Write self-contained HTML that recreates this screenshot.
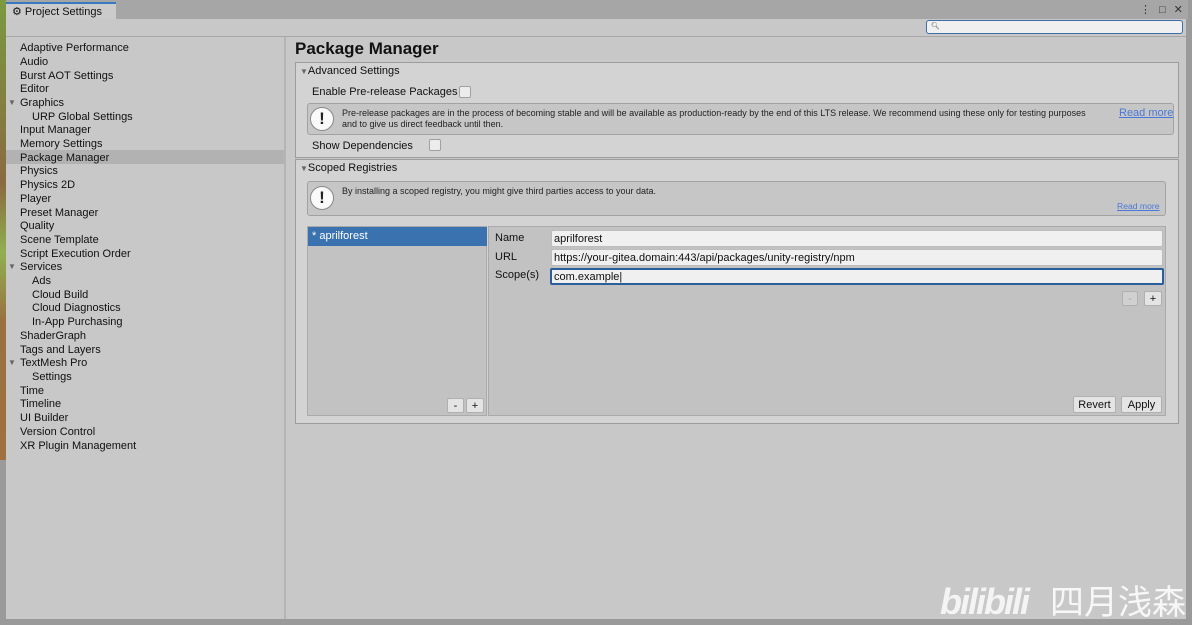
<!DOCTYPE html>
<html><head><meta charset="utf-8"><style>
*{margin:0;padding:0;box-sizing:border-box}
html,body{width:1192px;height:625px;overflow:hidden}
body{background:#9a9a9a;font-family:"Liberation Sans","Noto Sans CJK SC",sans-serif;font-size:11px;color:#101010;position:relative}
.a{position:absolute;white-space:nowrap}
.li{position:absolute;left:20px;height:14px;line-height:14px;font-size:11px;top:0;white-space:nowrap}
.box{position:absolute;background:#d3d3d3;border:1px solid #9c9c9c}
.help{position:absolute;background:#c6c6c6;border:1px solid #a2a2a2;border-radius:3px}
.ex{position:absolute;width:24px;height:24px;border-radius:50%;background:#fafafa;border:1px solid #888;text-align:center;font-weight:bold;font-size:17px;line-height:22px;color:#222}
.fld{position:absolute;background:#f0f0f0;border:1px solid #bdbdbd;border-radius:2px;height:17px;line-height:15px;padding-left:2px;font-size:11px;white-space:nowrap}
.btn{position:absolute;background:#e4e4e4;border:1px solid #b0b0b0;border-radius:2px;text-align:center;font-size:11px;line-height:14px}
.chk{position:absolute;width:12px;height:12px;background:#ececec;border:1px solid #a0a0a0;border-radius:2px}
.tri{font-size:8px;color:#666}
</style></head><body>
<div class="a" style="left:0;top:0;width:7px;height:460px;background:linear-gradient(#7a9a40,#8a6a40 40%,#90b050 55%,#9a7040 70%,#a07040)"></div>
<div class="a" style="left:6px;top:0;width:1182px;height:19px;background:#a6a6a6"></div>
<div class="a" style="left:6px;top:2px;width:110px;height:17px;background:#cbcbcb;border-top:2px solid #3b78c2;line-height:16px;padding-left:6px;font-size:11px">⚙ Project Settings</div>
<div class="a" style="left:1140px;top:3px;font-size:11px;color:#333;letter-spacing:8px">⋮□✕</div>
<div class="a" style="left:6px;top:19px;width:1180px;height:600px;background:#c8c8c8"></div>
<div class="a" style="left:6px;top:36px;width:1180px;height:1px;background:#a8a8a8"></div>
<div class="a" style="left:926px;top:20px;width:257px;height:14px;background:#f0f0f0;border:1px solid #3c6ea8;border-radius:3px;font-size:7px;padding-left:4px;line-height:12px;color:#555">🔍︎</div>
<div class="a" style="left:284px;top:37px;width:2px;height:582px;background:#b4b4b4"></div>
<div class="a" style="left:6px;top:150px;width:278px;height:14px;background:#b2b2b2"></div>
<div style="position:absolute;left:0;top:1px;width:284px;height:460px">
<div class="li" style="top:40px">Adaptive Performance</div>
<div class="li" style="top:54px">Audio</div>
<div class="li" style="top:68px">Burst AOT Settings</div>
<div class="li" style="top:81px">Editor</div>
<div class="li" style="top:95px"><span class="tri a" style="left:-12px">▼</span>Graphics</div>
<div class="li" style="top:109px;left:32px">URP Global Settings</div>
<div class="li" style="top:122px">Input Manager</div>
<div class="li" style="top:136px">Memory Settings</div>
<div class="li" style="top:150px">Package Manager</div>
<div class="li" style="top:163px">Physics</div>
<div class="li" style="top:177px">Physics 2D</div>
<div class="li" style="top:191px">Player</div>
<div class="li" style="top:205px">Preset Manager</div>
<div class="li" style="top:218px">Quality</div>
<div class="li" style="top:232px">Scene Template</div>
<div class="li" style="top:246px">Script Execution Order</div>
<div class="li" style="top:259px"><span class="tri a" style="left:-12px">▼</span>Services</div>
<div class="li" style="top:273px;left:32px">Ads</div>
<div class="li" style="top:287px;left:32px">Cloud Build</div>
<div class="li" style="top:300px;left:32px">Cloud Diagnostics</div>
<div class="li" style="top:314px;left:32px">In-App Purchasing</div>
<div class="li" style="top:328px">ShaderGraph</div>
<div class="li" style="top:342px">Tags and Layers</div>
<div class="li" style="top:355px"><span class="tri a" style="left:-12px">▼</span>TextMesh Pro</div>
<div class="li" style="top:369px;left:32px">Settings</div>
<div class="li" style="top:383px">Time</div>
<div class="li" style="top:396px">Timeline</div>
<div class="li" style="top:410px">UI Builder</div>
<div class="li" style="top:424px">Version Control</div>
<div class="li" style="top:438px">XR Plugin Management</div>
</div>

<div class="a" style="left:295px;top:39px;font-size:17px;font-weight:bold;color:#111">Package Manager</div>
<div class="box" style="left:295px;top:62px;width:884px;height:96px"></div>
<div class="a" style="left:300px;top:65px;font-size:11px"><span class="tri">▼</span>Advanced Settings</div>
<div class="a" style="left:312px;top:86px">Enable Pre-release Packages</div>
<div class="chk" style="left:459px;top:86px"></div>
<div class="help" style="left:307px;top:103px;width:867px;height:32px"></div>
<div class="ex" style="left:310px;top:107px">!</div>
<div class="a" style="left:342px;top:108px;font-size:9px;line-height:11px;color:#222">Pre-release packages are in the process of becoming stable and will be available as production-ready by the end of this LTS release. We recommend using these only for testing purposes<br>and to give us direct feedback until then.</div>
<div class="a" style="left:1119px;top:107px;font-size:11px;color:#4a78d8;text-decoration:underline">Read more</div>
<div class="a" style="left:312px;top:140px">Show Dependencies</div>
<div class="chk" style="left:429px;top:139px"></div>

<div class="box" style="left:295px;top:159px;width:884px;height:265px"></div>
<div class="a" style="left:300px;top:162px"><span class="tri">▼</span>Scoped Registries</div>
<div class="help" style="left:307px;top:181px;width:859px;height:35px"></div>
<div class="ex" style="left:310px;top:186px">!</div>
<div class="a" style="left:342px;top:186px;font-size:9px;color:#222">By installing a scoped registry, you might give third parties access to your data.</div>
<div class="a" style="left:1117px;top:201px;font-size:8.6px;color:#4a78d8;text-decoration:underline">Read more</div>
<div class="a" style="left:307px;top:226px;width:180px;height:190px;background:#c2c2c2;border:1px solid #aaa"></div>
<div class="a" style="left:308px;top:227px;width:179px;height:19px;background:#3a72b0;color:#fff;line-height:19px;padding-left:4px">* aprilforest</div>
<div class="a" style="left:488px;top:226px;width:678px;height:190px;background:#c2c2c2;border:1px solid #aaa"></div>
<div class="a" style="left:495px;top:232px">Name</div>
<div class="a" style="left:495px;top:251px">URL</div>
<div class="a" style="left:495px;top:269px">Scope(s)</div>
<div class="fld" style="left:551px;top:230px;width:612px;line-height:16px">aprilforest</div>
<div class="fld" style="left:551px;top:249px;width:612px;line-height:16px">https://your-gitea.domain:443/api/packages/unity-registry/npm</div>
<div class="fld" style="left:550px;top:268px;width:614px;border:2px solid #2a5e9c;line-height:14px">com.example|</div>
<div class="btn" style="left:1122px;top:291px;width:16px;height:15px;color:#aaa;background:#d0d0d0">-</div>
<div class="btn" style="left:1144px;top:291px;width:18px;height:15px">+</div>
<div class="btn" style="left:447px;top:398px;width:17px;height:15px">-</div>
<div class="btn" style="left:466px;top:398px;width:18px;height:15px">+</div>
<div class="btn" style="left:1073px;top:396px;width:43px;height:17px;line-height:16px">Revert</div>
<div class="btn" style="left:1121px;top:396px;width:41px;height:17px;line-height:16px">Apply</div>
<div class="a" style="left:940px;top:582px;font-size:36px;color:rgba(255,255,255,0.8);font-weight:bold;font-style:italic;letter-spacing:-2px;line-height:40px">bilibili</div>
<div class="a" style="left:1050px;top:584px;font-size:34px;color:rgba(255,255,255,0.85);line-height:38px">四月浅森</div>
</body></html>
